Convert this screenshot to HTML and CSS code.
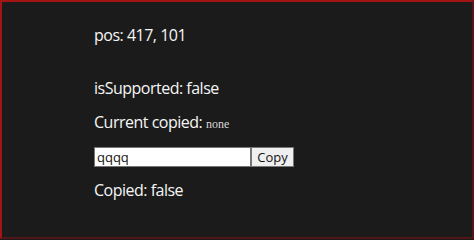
FILE: index.html
```html
<!DOCTYPE html>
<html>
<head>
<meta charset="utf-8">
<link rel="stylesheet" href="styles.css">
</head>
<body>
<div class="frame">
  <div class="content">
    <p class="line pos">pos: 417, 101</p>
    <p class="line supported">isSupported: false</p>
    <p class="line current">Current copied: <code class="value">none</code></p>
    <div class="row">
      <input class="field" type="text" value="qqqq"><button class="btn">Copy</button>
    </div>
    <p class="line copied">Copied: false</p>
  </div>
</div>
</body>
</html>
```
FILE: styles.css
```css
html, body {
  margin: 0;
  padding: 0;
  background: #1b1b1b;
}
.frame {
  box-sizing: border-box;
  width: 474px;
  height: 239px;
  border-style: solid;
  border-width: 2px;
  border-color: #a31515 #521616 #521616 #a31515;
  background: #1b1b1b;
  color: #f6f6f6;
  font-family: "Open Sans", "Noto Sans", sans-serif;
  font-size: 16px;
  font-weight: 500;
  letter-spacing: -0.5px;
}
.content {
  padding: 23px 0 0 92px;
}
.line {
  margin: 0;
  line-height: 20px;
  height: 20px;
}
.supported { margin-top: 33px; }
.current { margin-top: 14px; }
.value {
  font-family: "Liberation Serif", serif;
  font-size: 12px;
  font-weight: 400;
  letter-spacing: 0;
  color: #d8d8d8;
}
.row {
  display: flex;
  margin-top: 15px;
  height: 20px;
}
.field {
  box-sizing: border-box;
  width: 157px;
  height: 20px;
  margin: 0;
  border: 1px solid #767676;
  background: #fff;
  color: #111;
  padding: 0 2px;
  font-family: "Open Sans", sans-serif;
  font-size: 13px;
}
.btn {
  box-sizing: border-box;
  width: 43px;
  height: 20px;
  margin: 0;
  padding: 0;
  border: 1px solid #767676;
  background: #efefef;
  color: #111;
  font-family: "Open Sans", sans-serif;
  font-size: 13px;
}
.copied { margin-top: 13px; }
```
